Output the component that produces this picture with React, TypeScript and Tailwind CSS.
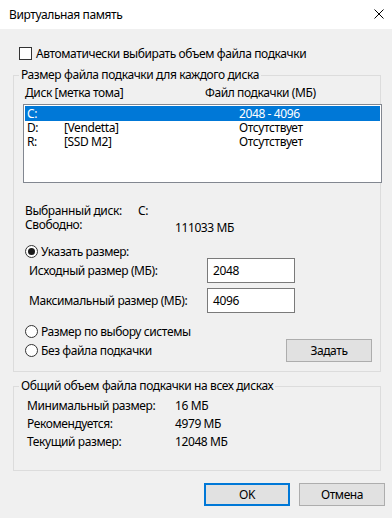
import React from 'react';

const disks = [
  { id: 'C:', label: '', size: '2048 - 4096', selected: true },
  { id: 'D:', label: '[Vendetta]', size: 'Отсутствует', selected: false },
  { id: 'R:', label: '[SSD M2]', size: 'Отсутствует', selected: false },
];

const totals = [
  { label: 'Минимальный размер:', value: '16 МБ' },
  { label: 'Рекомендуется:', value: '4979 МБ' },
  { label: 'Текущий размер:', value: '12048 МБ' },
];

const Radio: React.FC<{ checked?: boolean }> = ({ checked }) => (
  <span className="w-[13px] h-[13px] rounded-full border border-[#333] bg-white flex items-center justify-center shrink-0">
    {checked && <span className="w-[7px] h-[7px] rounded-full bg-[#1a1a1a]" />}
  </span>
);

const GroupBox: React.FC<{ title: string; className?: string; children: React.ReactNode }> = ({ title, className, children }) => (
  <div className={`relative mx-[13px] w-[368px] border border-[#dcdcdc] ${className ?? ''}`}>
    <span className="absolute -top-[8px] left-[5px] px-[2px] bg-[#f0f0f0] leading-[14px] whitespace-nowrap">{title}</span>
    {children}
  </div>
);

export default function App() {
  return (
    <div
      className="w-[392px] h-[518px] bg-[#f0f0f0] text-[12px] leading-[14px] tracking-[-0.4px] text-black overflow-hidden"
      style={{ fontFamily: '"Noto Sans", "Segoe UI", sans-serif' }}
    >
      {/* title bar */}
      <div className="h-[29px] bg-white flex items-center justify-between pl-[9px] pr-[8px]">
        <span>Виртуальная память</span>
        <svg width="10" height="10" viewBox="0 0 10 10" className="mb-[2px]">
          <path d="M0.5 0.5L9.5 9.5M9.5 0.5L0.5 9.5" stroke="#000" strokeWidth="1" fill="none" />
        </svg>
      </div>

      <div className="mt-[18px] h-[13px] flex items-center pl-[19px]">
        <span className="w-[13px] h-[13px] border border-[#333] bg-white" />
        <span className="ml-[4px]">Автоматически выбирать объем файла подкачки</span>
      </div>

      <GroupBox title="Размер файла подкачки для каждого диска" className="mt-[15px] pb-[9px]">
        <div className="mt-[10px] h-[14px] flex pl-[11px]">
          <span className="w-[180px]">Диск [метка тома]</span>
          <span>Файл подкачки (МБ)</span>
        </div>

        <div className="mt-[4px] ml-[9px] w-[359px] h-[79px] border border-[#828790] bg-white p-[1px]">
          {disks.map((d) => (
            <div
              key={d.id}
              className={`flex items-center pl-[2px] ${d.selected ? 'h-[15px] bg-[#0078d7] text-white' : 'h-[14px]'}`}
            >
              <span className="w-[37px]">{d.id}</span>
              <span className="w-[175px]">{d.label}</span>
              <span>{d.size}</span>
            </div>
          ))}
        </div>

        <div className="mt-[21px] h-[14px] flex pl-[11px]">
          <span className="w-[113px]">Выбранный диск:</span>
          <span>C:</span>
        </div>
        <div className="h-[14px] flex items-start pl-[11px]">
          <span className="w-[150px]">Свободно:</span>
          <span className="mt-[3px]">111033 МБ</span>
        </div>

        <div className="mt-[13px] h-[13px] flex items-center pl-[11px]">
          <Radio checked />
          <span className="ml-[3px]">Указать размер:</span>
        </div>

        <div className="h-[25px] flex items-center pl-[15px]">
          <span className="w-[178px]">Исходный размер (МБ):</span>
          <span className="w-[88px] h-[25px] border border-[#7a7a7a] bg-white pl-[5px] pt-[5px]">2048</span>
        </div>
        <div className="mt-[5px] h-[25px] flex items-center pl-[15px]">
          <span className="w-[178px]">Максимальный размер (МБ):</span>
          <span className="w-[88px] h-[25px] border border-[#7a7a7a] bg-white pl-[5px] pt-[5px]">4096</span>
        </div>

        <div className="mt-[12px] h-[13px] flex items-center pl-[11px]">
          <Radio />
          <span className="ml-[3px]">Размер по выбору системы</span>
        </div>
        <div className="mt-[1px] h-[23px] flex items-center pl-[11px] pr-[8px]">
          <Radio />
          <span className="ml-[3px]">Без файла подкачки</span>
          <button className="ml-auto w-[86px] h-[23px] border border-[#adadad] bg-[#e1e1e1]">Задать</button>
        </div>
      </GroupBox>

      <GroupBox title="Общий объем файла подкачки на всех дисках" className="mt-[14px] pt-[10px] pb-[19px]">
        {totals.map((t) => (
          <div key={t.label} className="h-[18px] flex items-center pl-[13px]">
            <span className="w-[148px]">{t.label}</span>
            <span>{t.value}</span>
          </div>
        ))}
      </GroupBox>

      <div className="mt-[12px] flex justify-end gap-[9px] pr-[7px]">
        <button className="w-[86px] h-[23px] border-2 border-[#0078d7] bg-[#e1e1e1]">OK</button>
        <button className="w-[86px] h-[23px] border border-[#adadad] bg-[#e1e1e1]">Отмена</button>
      </div>
    </div>
  );
}
